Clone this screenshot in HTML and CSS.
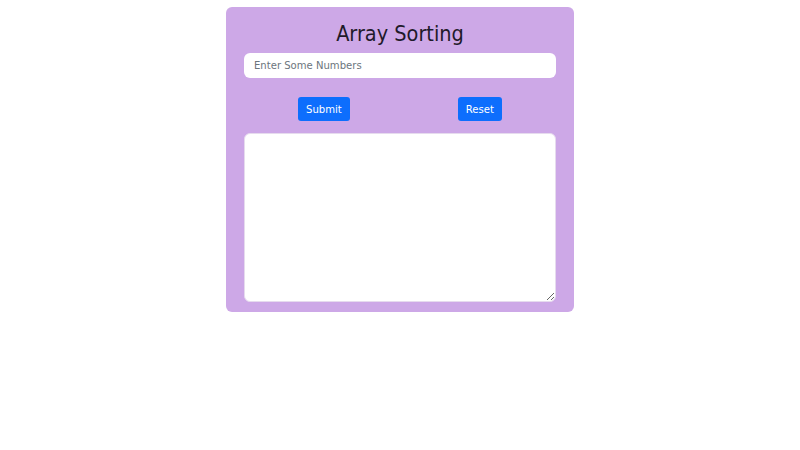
FILE: index.html
```html
<!DOCTYPE html>
<html>
<head>
<meta charset="utf-8">
<link rel="stylesheet" href="styles.css">
</head>
<body>
<div class="card">
  <h1 class="title">Array Sorting</h1>
  <input class="numbers" type="text" placeholder="Enter Some Numbers">
  <div class="actions">
    <button class="btn">Submit</button>
    <button class="btn">Reset</button>
  </div>
  <textarea class="output"></textarea>
</div>
</body>
</html>
```
FILE: styles.css
```css
html, body { margin: 0; padding: 0; background: #fff; }
body { font-family: "DejaVu Sans Condensed", "DejaVu Sans", sans-serif; color: #212529; }
.card {
  width: 348px;
  margin: 7px auto 0;
  box-sizing: border-box;
  background: #cda8e7;
  border-radius: 6px;
  padding: 15px 18px 10px;
  display: flex;
  flex-direction: column;
}
.title {
  margin: 0;
  font-size: 21.5px;
  font-weight: 400;
  text-align: center;
  line-height: 24px;
  color: #1f1a2a;
}
.numbers {
  margin-top: 7px;
  height: 25px;
  box-sizing: border-box;
  border: none;
  border-radius: 6px;
  padding: 0 10px;
  font-family: "DejaVu Sans Condensed", "DejaVu Sans", sans-serif;
  font-size: 11.2px;
  background: #fff;
  outline: none;
}
.numbers::placeholder { color: #6c757d; }
.actions {
  margin-top: 19px;
  display: flex;
  justify-content: space-around;
}
.btn {
  height: 24px;
  padding: 0 8px;
  border: none;
  border-radius: 3px;
  background: #0d6efd;
  color: #fff;
  font-family: "DejaVu Sans Condensed", "DejaVu Sans", sans-serif;
  font-size: 11.2px;
}
.output {
  margin-top: 12px;
  height: 169px;
  box-sizing: border-box;
  border: 1px solid #e6dbee;
  border-radius: 6px;
  background: #fff;
  resize: vertical;
}
```
